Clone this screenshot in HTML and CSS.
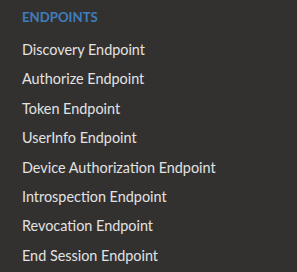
FILE: index.html
```html
<!DOCTYPE html>
<html>
<head>
<meta charset="utf-8">
<link rel="stylesheet" href="styles.css">
</head>
<body>
<nav class="sidebar">
  <div class="section-title">ENDPOINTS</div>
  <ul class="menu">
    <li class="item">Discovery Endpoint</li>
    <li class="item">Authorize Endpoint</li>
    <li class="item">Token Endpoint</li>
    <li class="item">UserInfo Endpoint</li>
    <li class="item">Device Authorization Endpoint</li>
    <li class="item">Introspection Endpoint</li>
    <li class="item">Revocation Endpoint</li>
    <li class="item">End Session Endpoint</li>
  </ul>
</nav>
</body>
</html>
```

FILE: styles.css
```css
html, body {
  margin: 0;
  padding: 0;
  background: #333130;
  height: 100%;
}
.sidebar {
  font-family: Lato, "Open Sans", sans-serif;
  padding: 9px 0 0 22px;
}
.section-title {
  color: #3f7ebd;
  font-weight: 700;
  font-size: 13.2px;
  line-height: 16px;
  margin-bottom: 10px;
}
.menu {
  list-style: none;
  margin: 0;
  padding: 0;
}
.item {
  color: #e2e2e2;
  font-size: 14.4px;
  line-height: 29.4px;
}
```
